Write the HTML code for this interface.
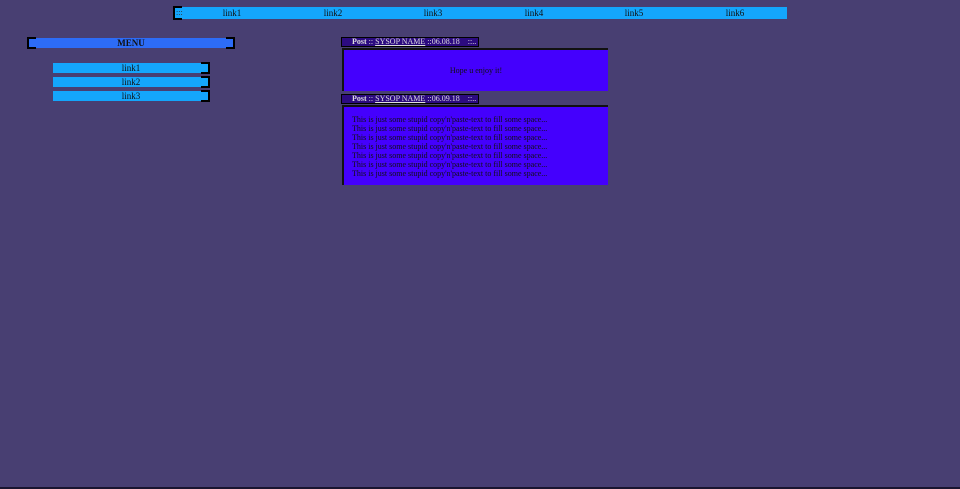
<!DOCTYPE html>
<html><head><meta charset="utf-8"><style>
body{margin:0;width:960px;height:489px;background:#483f72;font-family:"Liberation Serif",serif;font-size:9px;color:#111;position:relative;overflow:hidden}
div{position:absolute;box-sizing:border-box}
.top{left:173px;top:7px;width:614px;height:12px;background:#14a6fc}
.br{border:2px solid #000;border-right:none;width:9px;left:0;top:-1px;height:14px;font-size:8px;color:#333;line-height:10px;padding-left:1px}
.t{top:0;line-height:12px;width:60px;text-align:center}
.menu{left:28px;top:38px;width:206px;height:10px;background:#2d6cf7;text-align:center;font-weight:bold;line-height:10px}
.lb{border:2px solid #000;border-right:none;width:9px;height:12px;top:-1px;left:-1px}
.rb{border:2px solid #000;border-left:none;width:9px;height:12px;top:-1px;right:-1px}
.ml{left:53px;width:156px;height:10px;background:#14a6fc;text-align:center;line-height:10px}
.ph{left:341px;width:138px;height:10px;background:#2c0b80;border:1px solid #000;color:#ddd;font-weight:bold;line-height:8px;padding-left:10px;white-space:nowrap;font-size:8px}
.ph span{font-weight:normal}
.ph u{font-weight:normal;color:#ddd;text-decoration:underline}
.pb{left:342px;width:266px;background:#4400fd;border-top:2px solid #111;border-left:2px solid #111;font-size:8px}
</style></head><body>
<div class="top"><div class="br">:::</div>
<div class="t" style="left:29px">link1</div><div class="t" style="left:130px">link2</div><div class="t" style="left:230px">link3</div><div class="t" style="left:331px">link4</div><div class="t" style="left:431px">link5</div><div class="t" style="left:532px">link6</div></div>
<div class="menu"><div class="lb"></div>MENU<div class="rb"></div></div>
<div class="ml" style="top:63px">link1<div class="rb"></div></div>
<div class="ml" style="top:77px">link2<div class="rb"></div></div>
<div class="ml" style="top:91px">link3<div class="rb"></div></div>
<div class="ph" style="top:37px">Post <span>:: <u>SYSOP NAME</u> ::06.08.18 &nbsp;&nbsp; ::..</span></div>
<div class="pb" style="top:48px;height:43px;text-align:center;line-height:42px">Hope u enjoy it!</div>
<div class="ph" style="top:94px">Post <span>:: <u>SYSOP NAME</u> ::06.09.18 &nbsp;&nbsp; ::..</span></div>
<div class="pb" style="top:105px;height:80px;padding:8px 0 0 8px;line-height:9px">This is just some stupid copy'n'paste-text to fill some space...<br>This is just some stupid copy'n'paste-text to fill some space...<br>This is just some stupid copy'n'paste-text to fill some space...<br>This is just some stupid copy'n'paste-text to fill some space...<br>This is just some stupid copy'n'paste-text to fill some space...<br>This is just some stupid copy'n'paste-text to fill some space...<br>This is just some stupid copy'n'paste-text to fill some space...</div>
<div style="left:0;top:487px;width:960px;height:2px;background:#1a1530"></div>
</body></html>
